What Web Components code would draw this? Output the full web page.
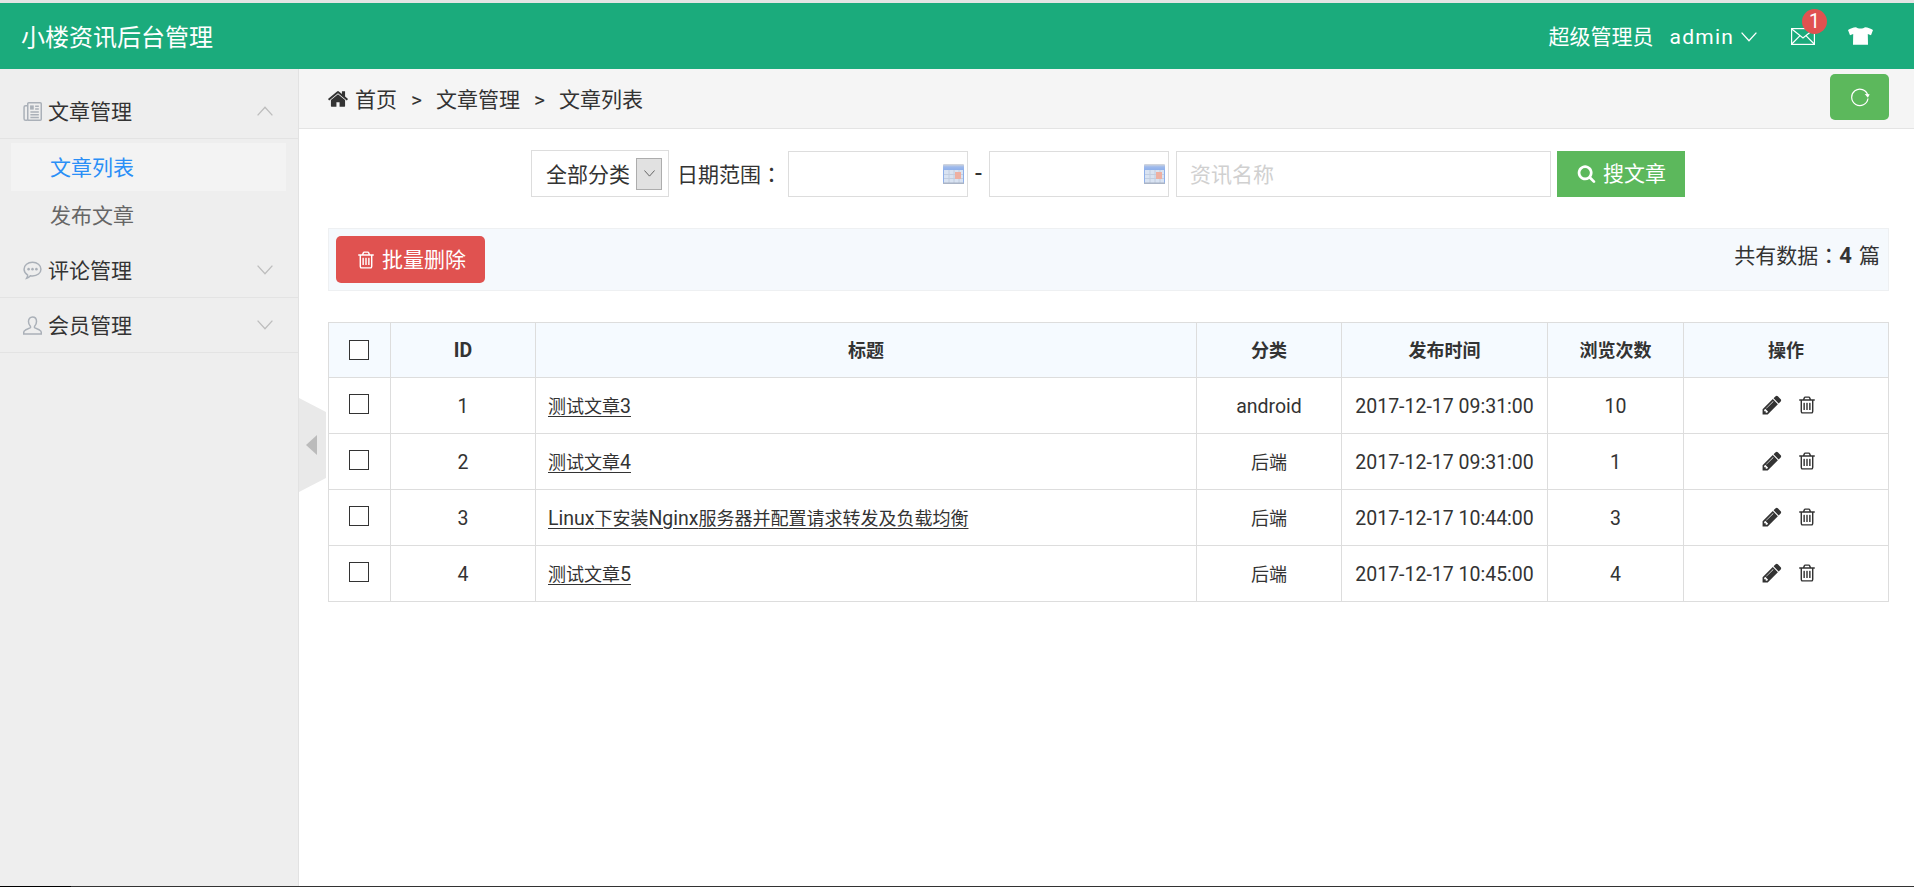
<!DOCTYPE html>
<html lang="zh-CN"><head><meta charset="utf-8"><title>小楼资讯后台管理</title>
<style>
html,body{margin:0;padding:0;height:887px;overflow:hidden;background:#fff}
body{font:21px/1.4 Roboto,"Noto Sans CJK SC",sans-serif;color:#333}
</style></head><body>
<admin-shell>
  <app-header slot="header" brand="小楼资讯后台管理" role="超级管理员" user="admin" badge="1"></app-header>
  <side-menu slot="side">
    <menu-group icon="news" label="文章管理" open>
      <menu-link active>文章列表</menu-link>
      <menu-link>发布文章</menu-link>
    </menu-group>
    <menu-group icon="comment" label="评论管理"></menu-group>
    <menu-group icon="user" label="会员管理"></menu-group>
  </side-menu>
  <bread-crumb slot="crumb"><span>首页</span><span>文章管理</span><span>文章列表</span></bread-crumb>
  <search-bar></search-bar>
  <list-toolbar total="4"></list-toolbar>
  <article-table></article-table>
</admin-shell>
<script>
const P={
 home:['0 0 1792 1792','<path fill="currentColor" d="M1472 992v480q0 26-19 45t-45 19h-384v-384h-256v384h-384q-26 0-45-19t-19-45v-480q0-1 .5-3t.5-3l575-474 575 474q1 2 1 6zm223-69l-62 74q-8 9-21 11h-3q-13 0-21-7l-692-577-692 577q-12 8-24 7-13-2-21-11l-62-74q-8-10-7-23.5t11-21.5l719-599q32-26 76-26t76 26l244 204v-195q0-14 9-23t23-9h192q14 0 23 9t9 23v408l219 182q10 8 11 21.5t-7 23.5z"/>'],
 trash:['0 0 1792 1792','<path fill="currentColor" d="M704 736v576q0 14-9 23t-23 9h-64q-14 0-23-9t-9-23v-576q0-14 9-23t23-9h64q14 0 23 9t9 23zm256 0v576q0 14-9 23t-23 9h-64q-14 0-23-9t-9-23v-576q0-14 9-23t23-9h64q14 0 23 9t9 23zm256 0v576q0 14-9 23t-23 9h-64q-14 0-23-9t-9-23v-576q0-14 9-23t23-9h64q14 0 23 9t9 23zm128 724v-948h-896v948q0 22 7 40.5t14.5 27 10.5 8.5h832q3 0 10.5-8.5t14.5-27 7-40.5zm-672-1076h448l-48-117q-7-9-17-11h-317q-10 2-17 11zm928 32v64q0 14-9 23t-23 9h-96v948q0 83-47 143.5t-113 60.5h-832q-66 0-113-58.5t-47-141.5v-952h-96q-14 0-23-9t-9-23v-64q0-14 9-23t23-9h309l70-167q15-37 54-63t79-26h320q40 0 79 26t54 63l70 167h309q14 0 23 9t9 23z"/>'],
 pencil:['0 0 1792 1792','<path fill="currentColor" d="M491 1536l91-91-235-235-91 91v107h128v128h107zm523-928q0-22-22-22-10 0-17 7l-542 542q-7 7-7 17 0 22 22 22 10 0 17-7l542-542q7-7 7-17zm-54-192l416 416-832 832h-416v-416zm683 96q0 53-37 90l-166 166-416-416 166-165q36-38 90-38 53 0 91 38l235 234q37 39 37 91z"/>'],
 search:['0 0 1792 1792','<path fill="currentColor" d="M1216 832q0-185-131.500-316.500t-316.500-131.500-316.500 131.500-131.500 316.500 131.500 316.500 316.500 131.500 316.500-131.500 131.500-316.500zm512 832q0 52-38 90t-90 38q-54 0-90-38l-343-342q-179 124-399 124-143 0-273.500-55.500t-225-150-150-225-55.500-273.500 55.500-273.500 150-225 225-150 273.500-55.500 273.500 55.500 225 150 150 225 55.500 273.500q0 220-124 399l343 343q37 37 37 90z"/>'],
 news:['0 0 18 18','<g fill="none" stroke="currentColor" stroke-width="1.400"><rect x="4.500" y=".7" width="12.800" height="16.600" rx="1"/><path d="M4.500 3.500H2.500a1.500 1.500 0 0 0-1.500 1.500v10.800a1.500 1.500 0 0 0 1.500 1.500h2"/><path d="M7 9.500h8M7 12h8M7 14.600h8M11.500 4h3.500M11.500 6.600h3.500"/></g><rect x="6.700" y="3.200" width="3.500" height="4" fill="currentColor"/>'],
 comment:['0 0 18 18','<path fill="none" stroke="currentColor" stroke-width="1.400" d="M9 1.200c4.500 0 8 2.800 8 6.500s-3.500 6.500-8 6.500c-.7 0-1.400-.1-2-.2-.9 1-2 1.900-3.500 2.300.6-.9.900-1.900.9-3C2.500 12 1 10 1 7.700 1 4 4.500 1.200 9 1.200z"/><g fill="currentColor"><circle cx="5.300" cy="7.700" r="1.200"/><circle cx="9" cy="7.700" r="1.200"/><circle cx="12.700" cy="7.700" r="1.200"/></g>'],
 user:['0 0 18 18','<path fill="none" stroke="currentColor" stroke-width="1.400" d="M9 1c2.300 0 3.800 1.800 3.800 4.200 0 2-.8 3.500-1.800 4.600-.4.500-.2 1.200.4 1.500l4.300 2c1 .5 1.600 1 1.600 2V17H.7v-1.700c0-1 .6-1.500 1.600-2l4.300-2c.6-.3.800-1 .4-1.500-1-1.100-1.800-2.600-1.800-4.600C5.200 2.800 6.700 1 9 1z"/>'],
 mail:['0 0 24 17','<g fill="none" stroke="currentColor" stroke-width="1.200"><rect x=".6" y=".6" width="22.800" height="15.800"/><path d="M.8 1l11.200 9 11.200-9M.8 16l8-8.200M23.200 16l-8-8.200"/></g>'],
 shirt:['0 0 25 18','<path fill="currentColor" d="M8 .2c1 .9 2.500 1.300 4.500 1.300S16 1.100 17 .2c3 .3 5.800 1.300 8 2.900l-2 5.200-3.200-1.300.2 10.800H5l.2-10.800L2 8.300 0 3.100C2.200 1.500 5 .5 8 .2z"/>'],
 refresh:['0 0 20 20','<path fill="none" stroke="currentColor" stroke-width="1.200" d="M17.800 8.200A8.200 8.200 0 1 0 18 11.500"/><path fill="currentColor" d="M14.700 7l5 .2-1.800 3.600z"/>'],
 up:['0 0 16 10','<path fill="none" stroke="currentColor" stroke-width="1.300" d="M.6 9.400L8 1.200l7.400 8.200"/>'],
 down:['0 0 16 10','<path fill="none" stroke="currentColor" stroke-width="1.300" d="M.6.600L8 8.800l7.400-8.200"/>'],
 cal:['0 0 21 20','<defs><linearGradient id="g" x1="0" y1="0" x2="0" y2="1"><stop offset="0" stop-color="#d9d9d9"/><stop offset=".15" stop-color="#9db9ec"/><stop offset=".3" stop-color="#8fb0ea"/></linearGradient></defs><rect width="21" height="20" rx="1" fill="url(#g)"/><rect x="1" y="6" width="19" height="13" fill="#d9e3f2"/><path stroke="#c2cee0" stroke-width="1" d="M6 6v13M11 6v13M16 6v13M1 10.500h19M1 14.500h19"/><rect x="12" y="8" width="6" height="7" fill="#eeb0a2"/><rect y="18.500" width="21" height="1.500" fill="#aab4c6"/>']
};
function svg(n,w,h,cls=''){const[v,b]=P[n];return `<svg viewBox="${v}" width="${w}" height="${h}" class="${cls}" style="display:block;flex:none" aria-hidden="true">${b}</svg>`}
function def(name,html){customElements.define(name,class extends HTMLElement{constructor(){super();this.attachShadow({mode:'open'})}connectedCallback(){this.shadowRoot.innerHTML=typeof html==='function'?html(this):html}})}
const colon='<span lang="zh-TW" style="font-family:\'Noto Sans CJK TC\',sans-serif">：</span>';

def('admin-shell',`<style>
:host{display:grid;grid-template:3px 66px 1fr 1px/299px 1fr;height:887px;width:1914px;position:relative}
.strip{grid-column:1/3;background:#e4e4e4}
.hd{grid-column:1/3;display:block}
.sd{grid-row:3;grid-column:1;display:flex;min-height:0}
.mn{grid-row:3;grid-column:2;display:flex;flex-direction:column;min-width:0;position:relative}
.body{display:flex;flex-direction:column;padding:21px 25px 0 29px}
.foot{grid-column:1/3;background:linear-gradient(90deg,#000 71px,#333 71px)}
.tab{position:absolute;left:0;top:329px;width:27px;height:94px;background:#e9e9e9;clip-path:polygon(0 0,100% 15%,100% 85%,0 100%);}
.tab i{position:absolute;left:7px;top:37px;width:0;height:0;border:10px solid transparent;border-left:0;border-right:11px solid #bbb}
</style>
<div class="strip"></div><slot class="hd" name="header"></slot><div class="sd"><slot name="side"></slot></div>
<div class="mn"><slot name="crumb"></slot><div class="body"><slot></slot></div><div class="tab"><i></i></div></div>
<div class="foot"></div>`);

def('app-header',h=>`<style>
:host{display:flex;align-items:center;height:66px;background:#1bab7c;color:#fff;box-sizing:border-box;padding:0 41px 0 21px}
.brand{font-size:24px;line-height:34px;flex:1;padding-top:3px}
.role{line-height:30px;padding-top:2px;margin-left:1px}
.user{margin-left:16px;line-height:30px;letter-spacing:1.200px;padding-top:2px}
.caret{margin-left:7px;margin-top:2px}
.mail{margin-left:34px;position:relative}
.badge{position:absolute;left:11px;top:-19px;width:25px;height:25px;border-radius:50%;background:#e05250;color:#fff;font-size:19.500px;line-height:25px;text-align:center}
.shirt{margin-left:33px}
</style>
<div class="brand">${h.getAttribute('brand')}</div>
<div class="role">${h.getAttribute('role')}</div><div class="user">${h.getAttribute('user')}</div>
${svg('down',16,10,'caret')}
<div class="mail">${svg('mail',24,17)}<span class="badge">${h.getAttribute('badge')}</span></div>
<div class="shirt">${svg('shirt',25,18)}</div>`);

def('side-menu',`<style>:host{display:block;width:298px;background:#eee;border-right:1px solid #e2e2e2;padding-top:15px;height:100%}</style><slot></slot>`);

def('menu-group',h=>{const o=h.hasAttribute('open');return `<style>
:host{display:block}
.row{display:flex;align-items:center;height:54px;border-bottom:1px solid #e3e3e3;padding:0 25px 0 23px;color:#333}
.ic{color:#aab0b8;margin-right:6px}
.t{flex:1;line-height:30px;padding-top:2px}
.ch{color:#bdbdbd}
.sub{padding:4px 0;display:${o?'block':'none'}}
</style>
<div class="row"><span class="ic">${svg(h.getAttribute('icon'),19,19)}</span><span class="t">${h.getAttribute('label')}</span><span class="ch">${svg(o?'up':'down',16,10)}</span></div>
<div class="sub"><slot></slot></div>`});

def('menu-link',h=>`<style>
:host{display:block;box-sizing:border-box;height:48px;padding:3px 0 0 39px;margin:0 12px 0 11px;line-height:45px;color:${h.hasAttribute('active')?'#2a8ff7':'#666'};background:${h.hasAttribute('active')?'#f3f3f3':'transparent'}}
</style><slot></slot>`);

def('bread-crumb',`<style>
:host{display:flex;align-items:center;height:59px;background:#f5f5f5;border-bottom:1px solid #e4e4e4;padding:0 25px 0 29px;color:#333}
.h{margin:0 6px 0 -1px}
.l{display:flex;flex:1;line-height:30px;padding-top:2px}
::slotted(span){display:block}
::slotted(span:not(:first-child)){margin-left:14px}
::slotted(span:not(:first-child))::before{content:">";margin-right:14px;font-size:21px}
.r{align-self:flex-start;width:59px;height:46px;margin-top:5px;border-radius:5px;background:#5cb85c;color:#fff;display:flex;align-items:center;justify-content:center}
</style>${svg('home',22,22,'h')}<div class="l"><slot></slot></div><div class="r">${svg('refresh',20,20)}</div>`);

def('date-field',`<style>
:host{display:flex;align-items:center;justify-content:flex-end;box-sizing:border-box;width:180px;height:46px;border:1px solid #ddd;padding-right:3px;background:#fff}
</style>${svg('cal',21,20)}`);

def('search-bar',`<style>
:host{display:flex;justify-content:center;align-items:center;height:47px;color:#333;padding-right:1px}
.sel{display:flex;align-items:center;box-sizing:border-box;width:138px;height:47px;border:1px solid #ddd;padding:0 6px 0 14px}
.sel span{flex:1;line-height:30px;padding-top:2px}
.sel b{display:flex;align-items:center;justify-content:center;box-sizing:border-box;width:26px;height:32px;background:#e1e1e1;border:1px solid #adadad;color:#555}
.lb{margin:0 6px 0 8px;line-height:30px;width:105px;white-space:nowrap;padding-top:1px}
.dash{width:21px;text-align:center;line-height:30px;font-size:25px}
.q{box-sizing:border-box;width:375px;height:46px;border:1px solid #ddd;margin-left:7px;padding:1px 0 0 13px;color:#d0d0d0;line-height:44px}
.go{display:flex;align-items:center;box-sizing:border-box;width:128px;height:46px;margin-left:6px;padding-left:20px;background:#5cb85c;color:#fff;line-height:30px}
.go svg{margin-right:7px}
.go span{padding-top:1px}
</style>
<div class="sel"><span>全部分类</span><b>${svg('down',11,7)}</b></div>
<div class="lb">日期范围${colon}</div><date-field></date-field><div class="dash">-</div><date-field></date-field>
<div class="q">资讯名称</div><div class="go">${svg('search',19,19)}<span>搜文章</span></div>`);

def('list-toolbar',h=>`<style>
:host{display:flex;justify-content:space-between;box-sizing:border-box;height:63px;margin-top:31px;background:#f5f9fd;border:1px solid #eef0f2;padding:7px 8px 0 7px}
.del{display:flex;align-items:center;box-sizing:border-box;width:149px;height:47px;padding-left:20px;background:#e05250;border-radius:5px;color:#fff;line-height:30px}
.del svg{margin-right:6px}
.del span{padding-top:1px}
.n{line-height:30px;padding-top:3px}
.n b{font-weight:700;font-size:22px;margin-right:2px}
</style><div class="del">${svg('trash',20,20)}<span>批量删除</span></div><div class="n">共有数据${colon}<b>${h.getAttribute('total')}</b> 篇</div>`);

const lat=s=>String(s).replace(/[\x00-\x7f]+/g,m=>`<span class="l">${m}</span>`);
const rows=[[1,'测试文章3','android','2017-12-17 09:31:00',10],[2,'测试文章4','后端','2017-12-17 09:31:00',1],[3,'Linux下安装Nginx服务器并配置请求转发及负载均衡','后端','2017-12-17 10:44:00',3],[4,'测试文章5','后端','2017-12-17 10:45:00',4]];
def('article-table',`<style>
:host{display:block;margin-top:31px;font-size:18px;color:#333}
.l{font-size:19.500px}
table{border-collapse:collapse;table-layout:fixed;width:1560px}
th,td{border:1px solid #ddd;padding:2px 0 0;text-align:center;line-height:28px}
th{height:52px;background:#f5faff;font-weight:700}
td{height:53px}
td.t{text-align:left;padding-left:12px}
a{color:#333;text-decoration:underline;text-underline-offset:3px}
.cb{display:block;box-sizing:border-box;width:20px;height:20px;border:1px solid #333;margin:0 auto 2px;position:relative;left:-1px;background:#fff}
td .cb{margin-bottom:6px}
.ops{display:flex;justify-content:center;align-items:center;gap:14px;margin:0 0 4px 6px}
</style>
<table><colgroup><col style="width:62px"><col style="width:145px"><col style="width:661px"><col style="width:145px"><col style="width:206px"><col style="width:136px"><col style="width:205px"></colgroup>
<thead><tr><th><span class="cb"></span></th>${['ID','标题','分类','发布时间','浏览次数','操作'].map(t=>`<th>${lat(t)}</th>`).join('')}</tr></thead>
<tbody>${rows.map(r=>`<tr><td><span class="cb"></span></td><td>${lat(r[0])}</td><td class="t"><a>${lat(r[1])}</a></td><td>${lat(r[2])}</td><td>${lat(r[3])}</td><td>${lat(r[4])}</td><td><div class="ops">${svg('pencil',22,22)}${svg('trash',20,20)}</div></td></tr>`).join('')}</tbody></table>`);
</script>
</body></html>
